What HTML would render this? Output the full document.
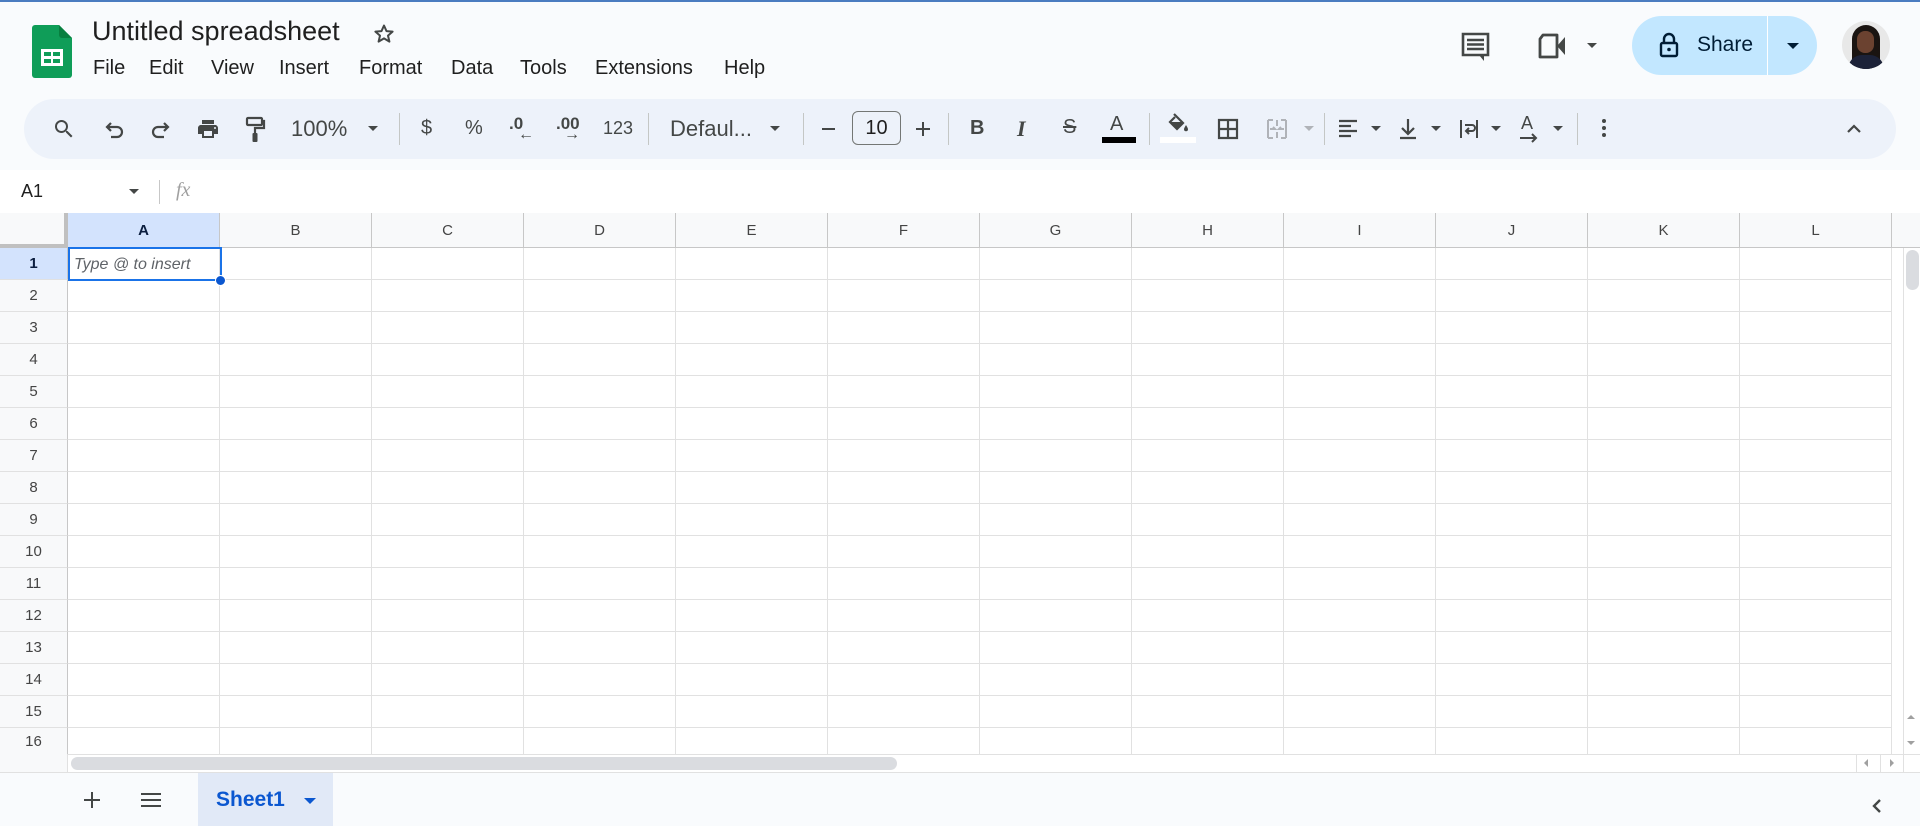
<!DOCTYPE html>
<html><head><meta charset="utf-8"><style>
*{margin:0;padding:0;box-sizing:border-box}
body{width:1920px;height:826px;overflow:hidden;background:#f9fbfd;font-family:"Liberation Sans",Arial,sans-serif;color:#1f1f1f;position:relative}
.a{position:absolute}
.menu span{position:absolute;top:57px;font-size:20px;color:#1f1f1f}
.tb{position:absolute;left:24px;top:99px;width:1872px;height:60px;background:#edf2fa;border-radius:30px}
.ic{position:absolute}
.t{position:absolute;font-size:18px;color:#444746}
.sep{position:absolute;top:113px;width:1px;height:32px;background:#c4c7c5}
.car{position:absolute;width:0;height:0;border-left:5px solid transparent;border-right:5px solid transparent;border-top:5px solid #444746}
.ch{position:absolute;top:213px;height:35px;width:152px;text-align:center;line-height:35px;font-size:15px;color:#444;border-right:1px solid #c7c7c7;border-bottom:1px solid #c7c7c7;background:#f8f9fa}
.rh{position:absolute;left:0;width:68px;height:32px;text-align:center;line-height:32px;font-size:15px;color:#444;border-right:1px solid #c7c7c7;border-bottom:1px solid #e1e1e1;background:#f8f9fa}
</style></head><body>
<div class="a" style="left:0;top:0;width:1920px;height:2px;background:#4a7cc0"></div>
<svg class="a" style="left:32px;top:25px" width="40" height="53" viewBox="0 0 40 53"><path d="M3 0h24l13 13v37a3 3 0 0 1-3 3H3a3 3 0 0 1-3-3V3a3 3 0 0 1 3-3z" fill="#0f9d58"/><path d="M27 0l13 13H30a3 3 0 0 1-3-3z" fill="#087f3f"/><rect x="9" y="24" width="22" height="17" fill="#fff"/><rect x="12" y="27" width="7" height="4" fill="#0f9d58"/><rect x="21" y="27" width="7" height="4" fill="#0f9d58"/><rect x="12" y="34" width="7" height="4" fill="#0f9d58"/><rect x="21" y="34" width="7" height="4" fill="#0f9d58"/></svg>
<div class="a" style="left:92px;top:16px;font-size:27px;color:#1f1f1f">Untitled spreadsheet</div>
<svg class="a" style="left:372px;top:22px" width="24" height="24" viewBox="0 0 24 24"><path d="M12 3.5l2.5 5.6 6.1.5-4.6 4 1.4 6-5.4-3.2-5.4 3.2 1.4-6-4.6-4 6.1-.5z" fill="none" stroke="#444746" stroke-width="2" stroke-linejoin="round"/></svg>
<div class="menu"><span style="left:93px">File</span><span style="left:149px">Edit</span><span style="left:211px">View</span><span style="left:279px">Insert</span><span style="left:359px">Format</span><span style="left:451px">Data</span><span style="left:520px">Tools</span><span style="left:595px">Extensions</span><span style="left:724px">Help</span></div>
<svg class="a" style="left:1460px;top:31px" width="32" height="32" viewBox="0 0 32 32"><path d="M3 3h25v21H3z" fill="none" stroke="#444746" stroke-width="2.6"/><path d="M7 9h17M7 13.5h17M7 18h17" stroke="#444746" stroke-width="2.6"/><path d="M24 23v7l-5-6z" fill="#444746"/></svg>
<svg class="a" style="left:1538px;top:33px" width="34" height="26" viewBox="0 0 34 26"><path d="M5 2h14v22H2V6z" fill="none" stroke="#444746" stroke-width="2.8" stroke-linejoin="round"/><path d="M20 12l7-8v18l-7-8z" fill="#444746"/></svg>
<div class="car" style="left:1587px;top:43px"></div>
<div class="a" style="left:1632px;top:16px;width:185px;height:59px;background:#c2e7ff;border-radius:30px"></div>
<div class="a" style="left:1767px;top:16px;width:1px;height:59px;background:#fff"></div>
<svg class="a" style="left:1659px;top:32px" width="20" height="26" viewBox="0 0 20 26"><path d="M5 11V7a5 5 0 0 1 10 0v4" fill="none" stroke="#001d35" stroke-width="2.4"/><rect x="2" y="11" width="16" height="13" rx="1.5" fill="none" stroke="#001d35" stroke-width="2.4"/><circle cx="10" cy="17.5" r="1.8" fill="#001d35"/></svg>
<div class="a" style="left:1697px;top:33px;font-size:21px;color:#001d35">Share</div>
<div class="a" style="left:1787px;top:43px;width:0;height:0;border-left:6px solid transparent;border-right:6px solid transparent;border-top:6px solid #001d35"></div>
<div class="a" style="left:1842px;top:21px;width:48px;height:48px;border-radius:50%;background:#e8e8e8;overflow:hidden"><div class="a" style="left:10px;top:4px;width:28px;height:44px;border-radius:14px 14px 4px 4px;background:#1a1411"></div><div class="a" style="left:15px;top:10px;width:17px;height:22px;border-radius:8px;background:#6b4230"></div><div class="a" style="left:6px;top:34px;width:36px;height:20px;border-radius:14px 14px 0 0;background:#1c2238"></div></div>
<div class="tb"></div>
<svg class="ic" style="left:52px;top:117px" width="24" height="24" viewBox="0 0 24 24"><path d="M15.5 14h-.79l-.28-.27A6.471 6.471 0 0 0 16 9.5 6.5 6.5 0 1 0 9.5 16c1.61 0 3.09-.59 4.23-1.57l.27.28v.79l5 4.99L20.49 19l-4.99-5zm-6 0C7.01 14 5 11.99 5 9.5S7.01 5 9.5 5 14 7.01 14 9.5 11.99 14 9.5 14z" fill="#444746"/></svg>
<svg class="ic" style="left:104px;top:118px" width="22" height="22" viewBox="0 0 22 22"><path d="M7 5L3 9l4 4M3 9h10a5 5 0 0 1 0 10H7" fill="none" stroke="#444746" stroke-width="2.2"/></svg>
<svg class="ic" style="left:149px;top:118px" width="22" height="22" viewBox="0 0 22 22"><path d="M15 5l4 4-4 4M19 9H9a5 5 0 0 0 0 10h6" fill="none" stroke="#444746" stroke-width="2.2"/></svg>
<svg class="ic" style="left:196px;top:117px" width="24" height="24" viewBox="0 0 24 24"><path d="M19 8H5c-1.66 0-3 1.34-3 3v6h4v4h12v-4h4v-6c0-1.66-1.34-3-3-3zm-3 11H8v-5h8v5zm3-7c-.55 0-1-.45-1-1s.45-1 1-1 1 .45 1 1-.45 1-1 1zm-1-9H6v4h12V3z" fill="#444746"/></svg>
<svg class="ic" style="left:243px;top:116px" width="24" height="28" viewBox="0 0 24 28"><rect x="4" y="2" width="15" height="7" rx="1" fill="none" stroke="#444746" stroke-width="2.2"/><path d="M19 5h2v7h-9v5" fill="none" stroke="#444746" stroke-width="2.2"/><rect x="9.5" y="17" width="5" height="9" rx="1" fill="#444746"/></svg>
<div class="t" style="left:291px;top:116px;font-size:22px">100%</div>
<div class="car" style="left:368px;top:126px"></div>
<div class="sep" style="left:399px"></div>
<div class="t" style="left:421px;top:117px;font-size:20px">$</div>
<div class="t" style="left:465px;top:117px;font-size:20px">%</div>
<div class="t" style="left:509px;top:114px;font-weight:bold;font-size:17px">.0</div><div class="t" style="left:518px;top:126px;font-size:16px">←</div>
<div class="t" style="left:556px;top:114px;font-weight:bold;font-size:17px">.00</div><div class="t" style="left:564px;top:126px;font-size:16px">→</div>
<div class="t" style="left:603px;top:118px;font-size:18px">123</div>
<div class="sep" style="left:648px"></div>
<div class="t" style="left:670px;top:116px;font-size:22px">Defaul...</div>
<div class="car" style="left:770px;top:126px"></div>
<div class="sep" style="left:803px"></div>
<div class="a" style="left:822px;top:128px;width:13px;height:2px;background:#444746"></div>
<div class="a" style="left:852px;top:111px;width:49px;height:34px;border:1px solid #747775;border-radius:6px;text-align:center;line-height:32px;font-size:20px;color:#1f1f1f">10</div>
<div class="a" style="left:916px;top:128px;width:14px;height:2px;background:#444746"></div><div class="a" style="left:922px;top:122px;width:2px;height:14px;background:#444746"></div>
<div class="sep" style="left:948px"></div>
<div class="t" style="left:970px;top:117px;font-weight:bold;font-size:20px">B</div>
<div class="t" style="left:1017px;top:116px;font-style:italic;font-weight:bold;font-size:22px;font-family:'Liberation Serif',serif">I</div>
<div class="t" style="left:1063px;top:116px;font-size:20px;text-decoration:line-through">S</div>
<div class="t" style="left:1110px;top:113px;font-size:20px">A</div><div class="a" style="left:1102px;top:137px;width:34px;height:6px;background:#000"></div>
<div class="sep" style="left:1149px"></div>
<svg class="ic" style="left:1165px;top:112px" width="26" height="24" viewBox="0 0 26 24"><path d="M9 2l9 9-6 6-7-7 5-5" fill="none" stroke="#444746" stroke-width="2.2"/><path d="M5 10h13l-6 6z" fill="#444746"/><path d="M21 13c1.5 2.5 2 3.5 2 4.2a2 2 0 0 1-4 0c0-.7.5-1.7 2-4.2z" fill="#444746"/></svg>
<div class="a" style="left:1160px;top:137px;width:36px;height:6px;background:#fff"></div>
<svg class="ic" style="left:1217px;top:118px" width="22" height="22" viewBox="0 0 22 22"><path d="M2 2h18v18H2zM11 2v18M2 11h18" fill="none" stroke="#444746" stroke-width="2.2"/></svg>
<svg class="ic" style="left:1266px;top:118px" width="22" height="22" viewBox="0 0 22 22"><path d="M2 2h5M15 2h5M2 20h5M15 20h5M2 2v18M20 2v18M11 2v6M11 14v6M4 11h5l-2-2M18 11h-5l2-2" fill="none" stroke="#b0b3b8" stroke-width="2"/></svg>
<div class="car" style="left:1304px;top:126px;border-top-color:#b0b3b8"></div>
<div class="sep" style="left:1324px"></div>
<svg class="ic" style="left:1337px;top:118px" width="22" height="22" viewBox="0 0 22 22"><path d="M2 3h18M2 8h12M2 13h18M2 18h12" stroke="#444746" stroke-width="2.2"/></svg>
<div class="car" style="left:1371px;top:126px"></div>
<svg class="ic" style="left:1397px;top:117px" width="22" height="24" viewBox="0 0 22 24"><path d="M11 2v15M5 11l6 6 6-6M3 21h16" fill="none" stroke="#444746" stroke-width="2.2"/></svg>
<div class="car" style="left:1431px;top:126px"></div>
<svg class="ic" style="left:1458px;top:118px" width="22" height="22" viewBox="0 0 22 22"><path d="M3 2v18M19 2v18M7 7h7a3 3 0 0 1 0 6H8M11 10l-3 3 3 3" fill="none" stroke="#444746" stroke-width="2"/></svg>
<div class="car" style="left:1491px;top:126px"></div>
<div class="t" style="left:1521px;top:113px;font-size:18px">A</div><svg class="ic" style="left:1519px;top:133px" width="20" height="10" viewBox="0 0 20 10"><path d="M1 5h16M13 1l4 4-4 4" fill="none" stroke="#444746" stroke-width="2"/></svg>
<div class="car" style="left:1553px;top:126px"></div>
<div class="sep" style="left:1577px"></div>
<div class="a" style="left:1602px;top:119px;width:4px;height:4px;border-radius:2px;background:#444746;box-shadow:0 7px 0 #444746,0 14px 0 #444746"></div>
<svg class="ic" style="left:1845px;top:121px" width="18" height="14" viewBox="0 0 18 14"><path d="M3 11l6-6 6 6" fill="none" stroke="#444746" stroke-width="2.2"/></svg>
<div class="a" style="left:0;top:170px;width:1920px;height:43px;background:#fff"></div>
<div class="a" style="left:21px;top:181px;font-size:18px;color:#1f1f1f">A1</div>
<div class="car" style="left:129px;top:189px"></div>
<div class="a" style="left:159px;top:180px;width:1px;height:24px;background:#c7c7c7"></div>
<div class="a" style="left:176px;top:179px;font-size:20px;font-style:italic;font-family:'Liberation Serif',serif;color:#a0a0a0">fx</div>
<div class="a" style="left:0;top:213px;width:1920px;height:541px;background:#fff"></div>
<div class="a" style="left:68px;top:248px;width:1824px;height:506px;background:repeating-linear-gradient(90deg,transparent 0 151px,#e1e1e1 151px 152px),repeating-linear-gradient(180deg,transparent 0 31px,#e1e1e1 31px 32px)"></div>
<div class="a" style="left:0;top:213px;width:68px;height:35px;background:#f8f9fa;border-right:4px solid #c0c0c0;border-bottom:4px solid #c0c0c0"></div>
<div class="ch" style="left:68px;background:#d3e3fd;color:#0b1e3f;font-weight:bold">A</div>
<div class="ch" style="left:220px">B</div><div class="ch" style="left:372px">C</div><div class="ch" style="left:524px">D</div><div class="ch" style="left:676px">E</div><div class="ch" style="left:828px">F</div><div class="ch" style="left:980px">G</div><div class="ch" style="left:1132px">H</div><div class="ch" style="left:1284px">I</div><div class="ch" style="left:1436px">J</div><div class="ch" style="left:1588px">K</div><div class="ch" style="left:1740px">L</div>
<div class="a" style="left:1892px;top:213px;width:28px;height:35px;background:#f8f9fa;border-bottom:1px solid #c7c7c7"></div>
<div class="rh" style="top:248px;background:#d3e3fd;color:#0b1e3f;font-weight:bold">1</div>
<div class="rh" style="top:280px">2</div><div class="rh" style="top:312px">3</div><div class="rh" style="top:344px">4</div><div class="rh" style="top:376px">5</div><div class="rh" style="top:408px">6</div><div class="rh" style="top:440px">7</div><div class="rh" style="top:472px">8</div><div class="rh" style="top:504px">9</div><div class="rh" style="top:536px">10</div><div class="rh" style="top:568px">11</div><div class="rh" style="top:600px">12</div><div class="rh" style="top:632px">13</div><div class="rh" style="top:664px">14</div><div class="rh" style="top:696px">15</div><div class="rh" style="top:728px;height:26px;line-height:28px;border-bottom:none">16</div>
<div class="a" style="left:68px;top:247px;width:154px;height:34px;border:2px solid #1a73e8"></div>
<div class="a" style="left:74px;top:256px;font-size:16px;font-style:italic;color:#5f6368">Type @ to insert</div>
<div class="a" style="left:215px;top:275px;width:11px;height:11px;border-radius:50%;background:#0b57d0;border:1px solid #fff"></div>
<div class="a" style="left:1903px;top:248px;width:17px;height:506px;background:#fff;border-left:1px solid #e1e1e1"></div>
<div class="a" style="left:1906px;top:250px;width:13px;height:40px;border-radius:7px;background:#dadce0"></div>
<div class="a" style="left:1907px;top:715px;border-left:4px solid transparent;border-right:4px solid transparent;border-bottom:4px solid #a0a0a0"></div>
<div class="a" style="left:1907px;top:741px;border-left:4px solid transparent;border-right:4px solid transparent;border-top:4px solid #a0a0a0"></div>
<div class="a" style="left:0;top:754px;width:1920px;height:18px;background:#fff;border-top:1px solid #e1e1e1"></div>
<div class="a" style="left:0;top:754px;width:68px;height:18px;background:#f8f9fa;border-right:1px solid #e1e1e1"></div>
<div class="a" style="left:71px;top:757px;width:826px;height:13px;border-radius:7px;background:#dadce0"></div>
<div class="a" style="left:1856px;top:754px;width:1px;height:18px;background:#e1e1e1"></div><div class="a" style="left:1880px;top:754px;width:1px;height:18px;background:#e1e1e1"></div><div class="a" style="left:1903px;top:754px;width:1px;height:18px;background:#e1e1e1"></div>
<div class="a" style="left:1864px;top:759px;border-top:4px solid transparent;border-bottom:4px solid transparent;border-right:4px solid #a0a0a0"></div>
<div class="a" style="left:1890px;top:759px;border-top:4px solid transparent;border-bottom:4px solid transparent;border-left:4px solid #a0a0a0"></div>
<div class="a" style="left:0;top:772px;width:1920px;height:54px;background:#f9fbfd;border-top:1px solid #e1e1e1"></div>
<div class="a" style="left:84px;top:799px;width:16px;height:2px;background:#444746"></div><div class="a" style="left:91px;top:792px;width:2px;height:16px;background:#444746"></div>
<div class="a" style="left:141px;top:793px;width:20px;height:2px;background:#444746;box-shadow:0 6px 0 #444746,0 12px 0 #444746"></div>
<div class="a" style="left:198px;top:773px;width:135px;height:53px;background:#e1e9f7"></div>
<div class="a" style="left:216px;top:788px;font-size:21px;font-weight:bold;color:#0b57d0">Sheet1</div>
<div class="a" style="left:304px;top:798px;border-left:6px solid transparent;border-right:6px solid transparent;border-top:6px solid #0b57d0"></div>
<svg class="a" style="left:1870px;top:797px" width="14" height="18" viewBox="0 0 14 18"><path d="M10 3L4 9l6 6" fill="none" stroke="#444746" stroke-width="2.4"/></svg>
</body></html>
